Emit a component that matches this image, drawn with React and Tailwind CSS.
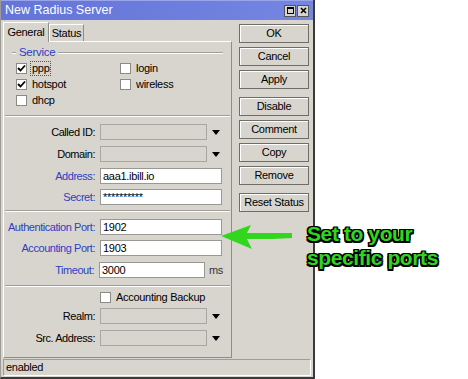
import React from 'react';

const font = "font-['Liberation_Sans',Arial,sans-serif]";

function Groove({ className = '' }) {
  return <div className={`h-[2px] border-t border-[#a09d96] border-b border-b-white ${className}`} />;
}

function Check({ checked, label, dotted }) {
  return (
    <div className="flex items-center h-[13px]">
      <div className="w-[11px] h-[11px] bg-white border border-[#8c8a85] flex items-center justify-center">
        {checked && (
          <svg width="9" height="9" viewBox="0 0 9 9">
            <path d="M1 4 L3.5 6.5 L8 1.5" stroke="#000" strokeWidth="1.8" fill="none" />
          </svg>
        )}
      </div>
      <span className={`ml-[4px] leading-[13px] px-[1px] ${dotted ? 'outline outline-1 outline-dotted outline-[#555]' : ''}`}>{label}</span>
    </div>
  );
}

function Arrow() {
  return (
    <svg width="8" height="5" viewBox="0 0 8 5" className="ml-[5px]">
      <path d="M0 0 H8 L4 5 Z" fill="#000" />
    </svg>
  );
}

function Field({ label, blue, value, disabled, drop, suffix, wide = true, mt }) {
  return (
    <div className={`flex items-center h-[16px] ${mt}`}>
      <div className={`w-[92px] text-right pr-[1px] tracking-[-0.45px] ${blue ? 'text-[#2b3fc4]' : 'text-black'}`}>{label}</div>
      <div
        className={`ml-[4px] h-[16px] ${wide ? 'w-[122px]' : 'w-[107px]'} border ${
          disabled ? 'bg-[#d8d5cf] border-[#a8a6a0]' : 'bg-white border-[#9a9892]'
        } px-[2px] leading-[14px] text-black`}
      >
        {value}
      </div>
      {drop && <Arrow />}
      {suffix && <span className="ml-[4px] text-[#333]">{suffix}</span>}
    </div>
  );
}

function Btn({ children, mt = 'mt-[4px]' }) {
  return (
    <div className={`${mt} h-[19px] w-[70px] border border-[#6f6d68] bg-[#d8d5cf] shadow-[inset_1px_1px_0_#fff] flex items-center justify-center text-black`}>
      {children}
    </div>
  );
}

export default function App() {
  return (
    <div className={`relative w-[468px] h-[379px] bg-white flex ${font} text-[11px] tracking-[-0.3px] overflow-hidden`}>
      <div className="w-[315px] h-[379px] bg-[#d8d5cf] border-l border-[#9c9a95] border-r-2 border-r-[#3a3a3a] border-b-2 border-b-[#3a3a3a] flex flex-col">
        {/* title bar */}
        <div className="h-[20px] bg-gradient-to-r from-[#6474d8] to-[#7585e2] flex items-center pl-[4px] pr-[4px] border-t border-[#9aa4ea]">
          <span className="text-white text-[12.5px] tracking-normal">New Radius Server</span>
          <div className="ml-auto flex gap-[1px]">
            <div className="w-[12px] h-[12px] bg-[#d8d5cf] border border-[#555] flex items-center justify-center">
              <div className="w-[7px] h-[7px] border border-black border-t-2" />
            </div>
            <div className="w-[12px] h-[12px] bg-[#d8d5cf] border border-[#555] flex items-center justify-center">
              <svg width="7" height="7" viewBox="0 0 7 7">
                <path d="M1 1 L6 6 M6 1 L1 6" stroke="#000" strokeWidth="1.6" />
              </svg>
            </div>
          </div>
        </div>

        <div className="flex flex-1">
          {/* left: tabs + panel */}
          <div className="w-[229px] ml-[2px] flex flex-col">
            <div className="flex items-end h-[20px] mt-[1px]">
              <div className="h-[20px] w-[46px] border border-b-0 border-[#8f8d88] border-l-white border-t-white bg-[#d8d5cf] flex items-center justify-center relative top-[1px] z-10">General</div>
              <div className="h-[17px] w-[35px] border border-b-0 border-[#8f8d88] border-l-white border-t-white bg-[#d8d5cf] flex items-center justify-center">Status</div>
            </div>
            <div className="h-[317px] border border-white border-r-[#8f8d88] border-b-[#8f8d88] px-[8px] flex flex-col">
              {/* service legend */}
              <div className="flex items-center h-[12px] mt-[5px]">
                <div className="w-[4px] h-[2px] border-t border-[#a09d96] border-b border-b-white" />
                <span className="text-[#2b3fc4] px-[3px] text-[11.5px]">Service</span>
                <Groove className="flex-1" />
              </div>
              <div className="flex mt-[3px] ml-[4px]">
                <div className="w-[104px] flex flex-col gap-[3px]">
                  <Check checked label="ppp" dotted />
                  <Check checked label="hotspot" />
                  <Check label="dhcp" />
                </div>
                <div className="flex flex-col gap-[3px]">
                  <Check label="login" />
                  <Check label="wireless" />
                </div>
              </div>
              <Groove className="mt-[8px] -mx-[7px]" />
              <div className="-ml-[8px] flex flex-col">
                <Field label="Called ID:" disabled drop wide={false} mt="mt-[7px]" />
                <Field label="Domain:" disabled drop wide={false} mt="mt-[6px]" />
                <Field label="Address:" blue value="aaa1.ibill.io" mt="mt-[6px]" />
                <Field label="Secret:" blue value="**********" mt="mt-[5px]" />
              </div>
              <Groove className="mt-[5px] -mx-[7px]" />
              <div className="-ml-[8px] flex flex-col">
                <Field label="Authentication Port:" blue value="1902" mt="mt-[7px]" />
                <Field label="Accounting Port:" blue value="1903" mt="mt-[5px]" />
                <Field label="Timeout:" blue value="3000" wide={false} suffix="ms" mt="mt-[6px]" />
              </div>
              <Groove className="mt-[7px] -mx-[7px]" />
              <div className="flex items-center mt-[4px] ml-[88px]">
                <Check label="Accounting Backup" />
              </div>
              <div className="-ml-[8px] flex flex-col">
                <Field label="Realm:" disabled drop wide={false} mt="mt-[4px]" />
                <Field label="Src. Address:" disabled drop wide={false} mt="mt-[6px]" />
              </div>
            </div>
          </div>

          {/* right buttons */}
          <div className="ml-[7px] flex flex-col pt-[4px]">
            <Btn mt="mt-[0px]">OK</Btn>
            <Btn>Cancel</Btn>
            <Btn>Apply</Btn>
            <Btn mt="mt-[8px]">Disable</Btn>
            <Btn>Comment</Btn>
            <Btn>Copy</Btn>
            <Btn>Remove</Btn>
            <Btn mt="mt-[8px]">Reset Status</Btn>
          </div>
        </div>

        {/* status bar */}
        <div className="h-[17px] mx-[2px] mb-[1px] border border-[#a09d96] border-r-white border-b-white flex items-center pl-[2px] text-black">
          enabled
        </div>
      </div>

      {/* annotation */}
      <svg className="absolute left-[220px] top-[222px]" width="76" height="30" viewBox="0 0 76 30">
        <path d="M1 14 L31 3 L27 11 C45 11 60 11 72 11 L72 16 C60 17 45 17 27 17 L32 27 Z" fill="#33d61f" />
      </svg>
      <div className="absolute left-[307px] top-[222px] font-['Liberation_Sans',Arial,sans-serif] font-bold text-[21px] leading-[24px] tracking-[-0.4px] text-[#2fd620] [text-shadow:-1.5px_-1.5px_0_#000,1.5px_-1.5px_0_#000,-1.5px_1.5px_0_#000,1.5px_1.5px_0_#000,0_1.5px_0_#000,0_-1.5px_0_#000,1.5px_0_0_#000,-1.5px_0_0_#000]">
        Set to your<br />specific ports
      </div>
    </div>
  );
}
